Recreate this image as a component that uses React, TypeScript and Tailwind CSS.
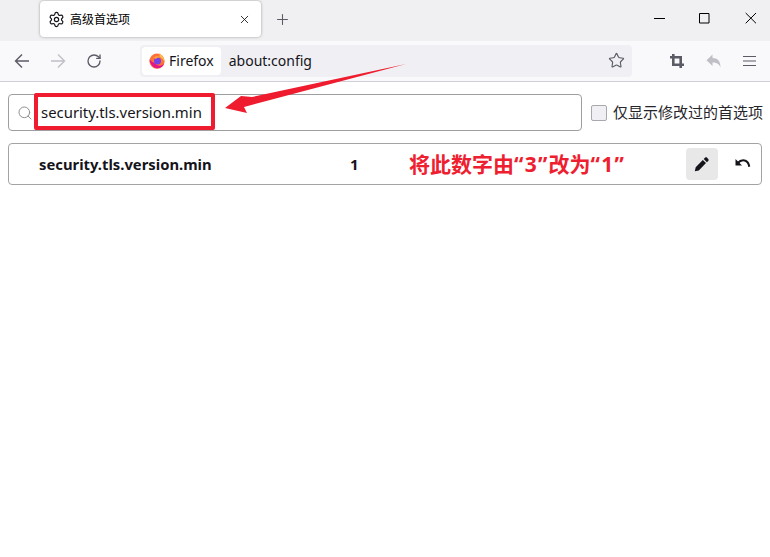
import React from "react";
import { X, Plus, RotateCw, Star, Settings, Search } from "lucide-react";

const sans = "font-['Noto_Sans','Noto_Sans_CJK_SC',sans-serif]";

const FirefoxLogo = () => (
  <svg width="16" height="17" viewBox="0 0 16 17">
    <circle cx="8" cy="9.200" r="7.600" fill="#ff7139" />
    <path d="M10.500 .5c.5 2 3 3 4.300 6 .8 2 .8 3 .8 4-1-3-3-4.500-5-5.500z" fill="#ffbd4f" />
    <path d="M.5 7c.5 6 4.500 9.500 8.500 9.300 3-.2 5.500-2 6.300-5C13.500 14 9 14.500 6.500 12 4.500 10 2.500 10 .5 7z" fill="#e31587" />
    <circle cx="8.500" cy="9" r="3.500" fill="#7542e5" />
    <path d="M4.500 6c2-2 5-2.200 6.500-.5-2-.3-3.500.3-4 1.500-1-.8-1.500-1-2.500-1z" fill="#ffa436" />
  </svg>
);

const BackArrow = ({ className }: { className?: string }) => (
  <svg width="16" height="16" viewBox="0 0 16 16" fill="none" stroke="currentColor" strokeWidth="1.400" className={className}>
    <path d="M15 8H1.500M8 1.500 1.500 8 8 14.500" />
  </svg>
);

const CropIcon = () => (
  <svg width="14" height="14" viewBox="0 0 14 14" fill="none" stroke="currentColor" strokeWidth="2.600">
    <path d="M0 3.300h10.700V14M3.300 0v10.700H14" />
  </svg>
);

const UndoIcon = ({ className }: { className?: string }) => (
  <svg width="15" height="14" viewBox="0 0 15 14" fill="currentColor" className={className}>
    <path d="M6.500.5v3.400c5 0 8 2.600 8 9.600-1.300-3.500-3.500-5-8-5v3.400L.5 6.200z" />
  </svg>
);

const RevertIcon = () => (
  <svg width="16" height="12" viewBox="0 0 16 12" fill="none" className="text-[#15141a]">
    <path d="M2.500 5.300C5 2.600 8 1.800 10.500 2.800c2 .8 3.200 2.900 3.800 6" stroke="currentColor" strokeWidth="2" />
    <path d="M0.500 1v6.500H7z" fill="currentColor" />
  </svg>
);

const PencilIcon = () => (
  <svg width="16" height="16" viewBox="0 0 16 16" fill="#15141a">
    <path d="M11 1.800c.6-.6 1.500-.6 2.100 0l1.100 1.100c.6.600.6 1.500 0 2.100l-1.300 1.300-3.200-3.200zM8.800 3.900l3.200 3.200-7.200 7.300-4 .9.900-4.100z" />
  </svg>
);

export default function App() {
  return (
    <div className={"relative h-[557px] w-[770px] overflow-hidden bg-white text-[#15141a] " + sans}>
      {/* tab strip */}
      <div className="flex h-[41px] items-start bg-[#f0f0f2]">
        <div className="ml-10 mt-[1px] flex h-[36px] w-[221px] items-center rounded-[4px] bg-white pl-2 pr-[10px] shadow-[0_0_3px_rgba(0,0,0,0.35)]">
          <Settings size={17} strokeWidth={1.700} />
          <span className="ml-[5px] flex-1 pt-[1px] text-[12px] text-black">高级首选项</span>
          <X size={13} strokeWidth={1.600} />
        </div>
        <div className="ml-[13px] mt-[11px] text-[#5b5b66]">
          <Plus size={17} strokeWidth={1.500} />
        </div>
        {/* window controls */}
        <div className="ml-auto flex items-center pr-[13px] pt-[12px] text-black">
          <svg width="12" height="12" viewBox="0 0 12 12" stroke="currentColor"><path d="M0 6.500h11" /></svg>
          <svg width="12" height="12" viewBox="0 0 12 12" fill="none" stroke="currentColor" className="ml-[32px]"><path d="M1.500 1.500h9.500v9.500h-9.500z" /></svg>
          <svg width="12" height="12" viewBox="0 0 12 12" stroke="currentColor" className="ml-[35px]"><path d="M.7 1 11 11.300M11 1 .7 11.300" /></svg>
        </div>
      </div>

      {/* toolbar */}
      <div className="flex h-[41px] items-center border-b border-[#cfcfd8] bg-[#f9f9fb] pb-[1px]">
        <div className="ml-[14px] flex w-[126px] items-center text-[#5b5b66]">
          <BackArrow />
          <BackArrow className="ml-[20px] rotate-180 text-[#bfbfc6]" />
          <RotateCw size={16} strokeWidth={2} className="ml-[20px]" />
        </div>
        <div className="flex h-[32px] w-[492px] items-center rounded-[4px] bg-[#f0f0f4] pl-[2px] pr-[7px]">
          <div className="flex h-[28px] items-center gap-[4px] rounded-[4px] bg-white px-[7px] text-[14px] leading-none">
            <FirefoxLogo />
            <span>Firefox</span>
          </div>
          <span className="ml-[8px] flex-1 text-[14px] leading-none">about:config</span>
          <Star size={17} strokeWidth={1.600} className="text-[#5b5b66]" />
        </div>
        <div className="ml-[38px] flex items-center text-[#5b5b66]">
          <CropIcon />
          <UndoIcon className="ml-[22px] text-[#bfbfc6]" />
          <svg width="13" height="12" viewBox="0 0 13 12" stroke="currentColor" strokeWidth="1.200" className="ml-[22px]">
            <path d="M0 1.500h13M0 6h13M0 10.500h13" />
          </svg>
        </div>
      </div>

      {/* search row */}
      <div className="flex items-center px-2 pt-[12px]">
        <div className="flex h-[37px] w-[574px] shrink-0 items-center rounded-[4px] border border-[#9e9ea0] pl-[8px]">
          <Search size={16} strokeWidth={1.500} className="text-[#8f8f8f]" />
          <span className="ml-[8px] text-[14.900px] leading-none">security.tls.version.min</span>
        </div>
        <div className="ml-[9px] h-[16px] w-[16px] shrink-0 rounded-[2px] border border-[#a8a8ad] bg-[#f0f0f4]" />
        <span className="ml-[6px] whitespace-nowrap text-[15px] leading-none text-[#26252b]">仅显示修改过的首选项</span>
      </div>

      {/* pref row */}
      <div className="mx-2 mt-[12px] flex h-[42px] items-center rounded-[4px] border border-[#a3a3a3] pl-[30px] pr-[2px]">
        <span className="w-[311px] text-[14.800px] leading-none font-bold">security.tls.version.min</span>
        <span className="w-[59px] text-[15px] leading-none font-bold">1</span>
        <span className="flex-1 whitespace-nowrap text-[21px] leading-none font-bold text-[#ee2030]">
          将此数字由<span className="tracking-[1.300px]">“3”</span>改为<span className="tracking-[1.300px]">“1”</span>
        </span>
        <div className="flex h-8 w-8 items-center justify-center rounded-[4px] bg-[#e8e8e8]">
          <PencilIcon />
        </div>
        <div className="ml-[9px] flex w-8 justify-center">
          <RevertIcon />
        </div>
      </div>

      {/* annotation */}
      <div className="absolute left-[34px] top-[93px] h-[37px] w-[181px] rounded-[2px] border-4 border-[#ee1c2e]" />
      <svg className="absolute left-0 top-0" width="770" height="557" viewBox="0 0 770 557">
        <polygon points="406,64 252,97 241,96 225,108 247,113 244,107" fill="#ee1c2e" />
      </svg>
    </div>
  );
}
